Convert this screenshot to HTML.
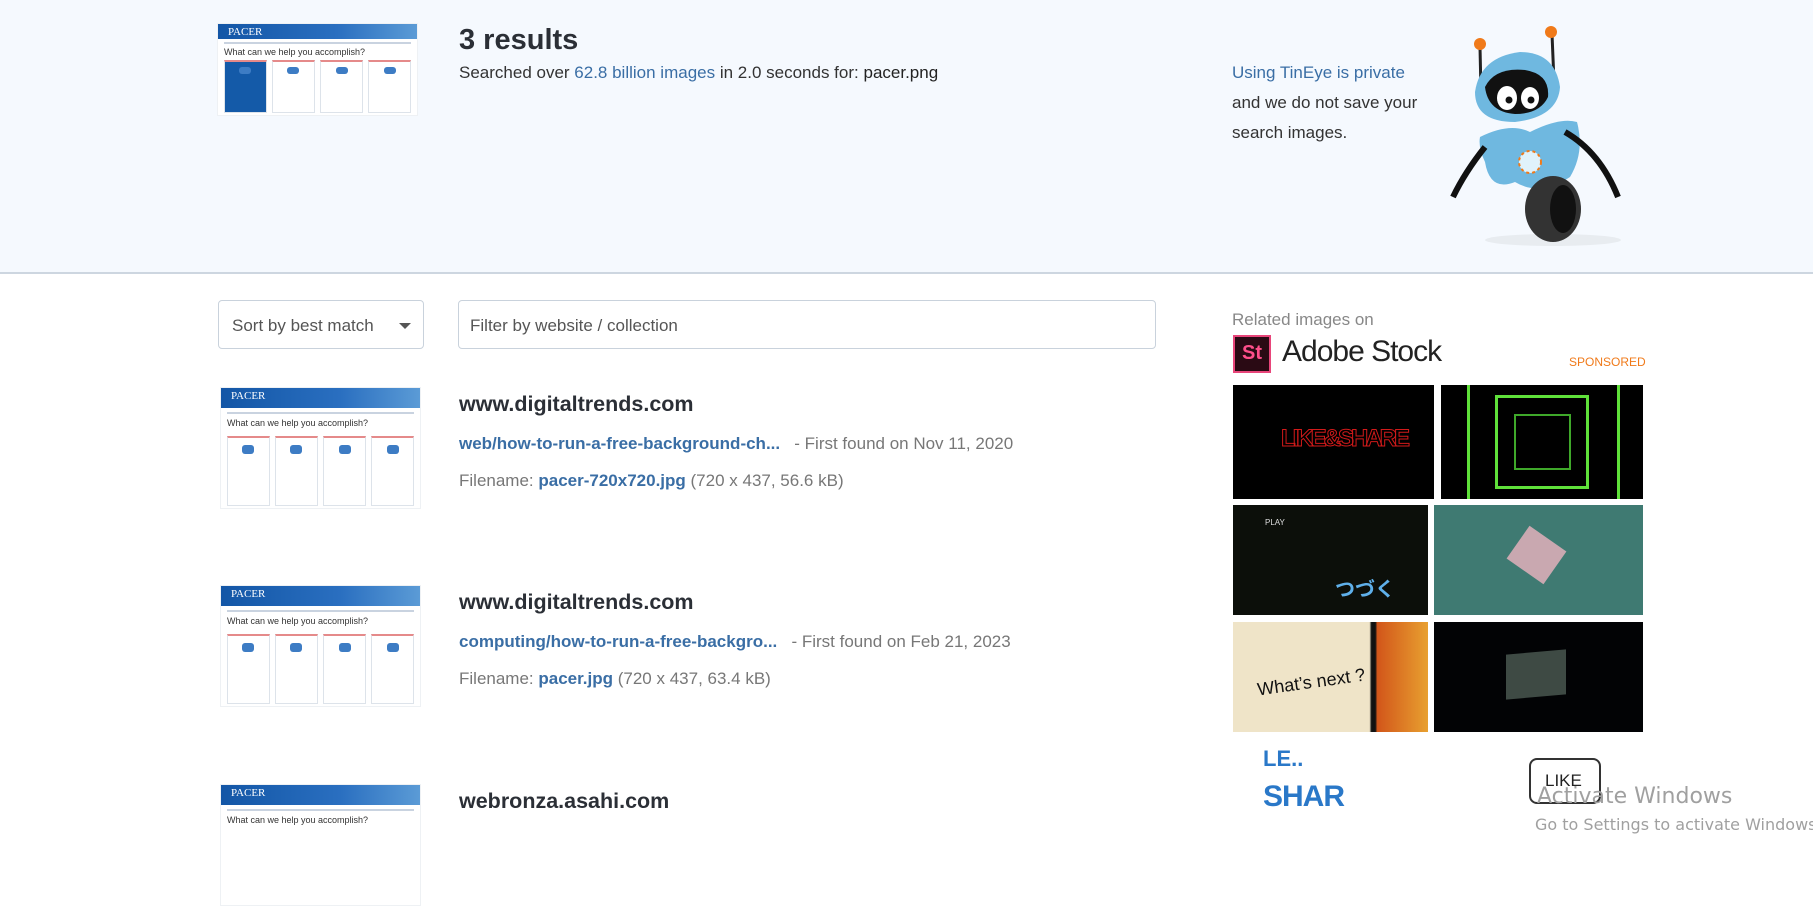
<!DOCTYPE html>
<html><head><meta charset="utf-8">
<style>
*{margin:0;padding:0;box-sizing:border-box}
body{width:1813px;height:828px;overflow:hidden;background:#fff;font-family:"Liberation Sans","Noto Sans CJK JP",sans-serif;color:#2b2f36;position:relative}
.hdr{position:absolute;left:0;top:0;width:1813px;height:274px;background:#f5f9fe;border-bottom:2px solid #cdd6e0}
.abs{position:absolute}
a{color:#3a6ea5;text-decoration:none}
.thumb{position:absolute;background:#fff;overflow:hidden;border:1px solid #eef1f4}
.thumb .bar{position:absolute;left:0;top:0;right:0;height:17%;background:linear-gradient(90deg,#1356a6,#2a6fc0 60%,#5b9bd6)}
.thumb .bar span{position:absolute;left:5%;top:12%;color:#fff;font-family:"Liberation Serif",serif;font-size:11px}
.thumb .nav{position:absolute;left:3%;right:3%;top:20%;height:2px;background:#c9d3e0}
.thumb .q{position:absolute;left:3%;top:25%;font-size:9px;color:#333;white-space:nowrap}
.thumb .cards{position:absolute;left:3%;right:3%;top:40%;bottom:2%;display:flex;gap:3%}
.thumb .cards div{flex:1;border:1px solid #dde3ea;border-top:2px solid #e58a8a;background:#fff;position:relative}
.thumb .cards div:after{content:"";position:absolute;left:35%;top:10%;width:30%;height:14%;background:#3d7cc4;border-radius:3px}
.thumb .cards div.blue{background:#145aa8}
.title{position:absolute;font-size:21.5px;font-weight:bold;color:#2b2f36}
.link{position:absolute;font-size:17px;color:#777;white-space:nowrap}
.link a{font-weight:bold}
.grid div{position:absolute;overflow:hidden}
</style></head><body>
<div class="hdr"></div>

<div class="thumb" style="left:217px;top:23px;width:201px;height:93px">
 <div class="bar"><span>PACER</span></div><div class="nav"></div><div class="q">What can we help you accomplish?</div>
 <div class="cards"><div class="blue"></div><div></div><div></div><div></div></div>
</div>
<div class="abs" style="left:459px;top:24px;font-size:29px;font-weight:bold;color:#2b2f36">3 results</div>
<div class="abs" style="left:459px;top:63px;font-size:17px;color:#333">Searched over <a>62.8 billion images</a> in 2.0 seconds for: <span style="color:#222">pacer.png</span></div>

<div class="abs" style="left:1232px;top:58px;font-size:17px;line-height:30px;color:#333">
 <a style="font-weight:normal">Using TinEye is private</a><br>and we do not save your<br>search images.</div>

<svg class="abs" style="left:1450px;top:22px" width="200" height="232" viewBox="0 0 200 232">
 <ellipse cx="103" cy="218" rx="68" ry="6" fill="#e8ecf0"/>
 <line x1="30" y1="25" x2="31" y2="70" stroke="#222" stroke-width="3"/>
 <line x1="102" y1="12" x2="104" y2="60" stroke="#222" stroke-width="3"/>
 <circle cx="30" cy="22" r="6" fill="#f07a1a"/><circle cx="101" cy="10" r="6" fill="#f07a1a"/>
 <path d="M25 70 Q30 35 70 30 Q105 30 110 65 Q108 95 65 100 Q25 100 25 70Z" fill="#6fb8e0"/>
 <path d="M35 65 Q45 45 75 48 Q100 52 98 75 Q90 92 65 92 Q38 90 35 65Z" fill="#111"/>
 <ellipse cx="57" cy="76" rx="10" ry="12" fill="#fff"/><ellipse cx="80" cy="76" rx="9" ry="11" fill="#fff"/>
 <circle cx="59" cy="78" r="3.5" fill="#111"/><circle cx="81" cy="78" r="3.5" fill="#111"/>
 <path d="M30 115 Q60 100 80 110 Q110 95 127 100 Q135 130 120 155 Q90 175 65 160 Q40 170 35 140 Q28 125 30 115Z" fill="#6fb8e0"/>
 <path d="M35 125 Q15 150 3 175" stroke="#111" stroke-width="6" fill="none"/>
 <path d="M115 110 Q150 130 168 175" stroke="#111" stroke-width="6" fill="none"/>
 <circle cx="80" cy="140" r="11" fill="#e0f2fb" stroke="#f07a1a" stroke-width="2" stroke-dasharray="3 3"/>
 <ellipse cx="103" cy="187" rx="28" ry="33" fill="#333"/><ellipse cx="113" cy="187" rx="13" ry="24" fill="#111"/>
</svg>

<div class="abs" style="left:218px;top:300px;width:206px;height:49px;border:1px solid #c9d2dc;border-radius:4px;background:#fff;font-size:17px;color:#555;padding:15px 0 0 13px">Sort by best match
 <div class="abs" style="right:12px;top:22px;border-left:6px solid transparent;border-right:6px solid transparent;border-top:6px solid #555"></div></div>
<div class="abs" style="left:458px;top:300px;width:698px;height:49px;border:1px solid #c9d2dc;border-radius:4px;background:#fff;font-size:17px;color:#555;padding:15px 0 0 11px">Filter by website / collection</div>

<div class="thumb" style="left:220px;top:387px;width:201px;height:122px">
 <div class="bar"><span>PACER</span></div><div class="nav"></div><div class="q">What can we help you accomplish?</div>
 <div class="cards"><div></div><div></div><div></div><div></div></div></div>
<div class="title" style="left:459px;top:392px">www.digitaltrends.com</div>
<div class="link" style="left:459px;top:434px"><a>web/how-to-run-a-free-background-ch...</a> &nbsp; - First found on Nov 11, 2020</div>
<div class="link" style="left:459px;top:471px">Filename: <a>pacer-720x720.jpg</a> (720 x 437, 56.6 kB)</div>

<div class="thumb" style="left:220px;top:585px;width:201px;height:122px">
 <div class="bar"><span>PACER</span></div><div class="nav"></div><div class="q">What can we help you accomplish?</div>
 <div class="cards"><div></div><div></div><div></div><div></div></div></div>
<div class="title" style="left:459px;top:590px">www.digitaltrends.com</div>
<div class="link" style="left:459px;top:632px"><a>computing/how-to-run-a-free-backgro...</a> &nbsp; - First found on Feb 21, 2023</div>
<div class="link" style="left:459px;top:669px">Filename: <a>pacer.jpg</a> (720 x 437, 63.4 kB)</div>

<div class="thumb" style="left:220px;top:784px;width:201px;height:122px">
 <div class="bar"><span>PACER</span></div><div class="nav"></div><div class="q">What can we help you accomplish?</div></div>
<div class="title" style="left:459px;top:789px">webronza.asahi.com</div>

<div class="abs" style="left:1232px;top:310px;font-size:17px;color:#888">Related images on</div>
<div class="abs" style="left:1233px;top:335px;width:38px;height:38px;background:#2a0a14;border:2px solid #e8457a;color:#ff4f8b;font-weight:bold;font-size:20px;text-align:center;line-height:33px">St</div>
<div class="abs" style="left:1282px;top:335px;font-size:30px;color:#222;letter-spacing:-1px">Adobe Stock</div>
<div class="abs" style="left:1569px;top:355px;font-size:12px;color:#f07a1a">SPONSORED</div>

<div class="grid">
 <div style="left:1233px;top:385px;width:201px;height:114px;background:#000"><span style="position:absolute;left:48px;top:40px;color:#000;font-weight:bold;font-size:24px;letter-spacing:-3px;-webkit-text-stroke:1px #d21a1a">LIKE&amp;SHARE</span></div>
 <div style="left:1441px;top:385px;width:202px;height:114px;background:#000">
  <div style="position:absolute;left:26px;top:0;width:153px;height:114px;border-left:3px solid #5fe03a;border-right:3px solid #5fe03a"></div>
  <div style="position:absolute;left:54px;top:10px;width:94px;height:94px;border:3px solid #5fe03a"></div>
  <div style="position:absolute;left:73px;top:29px;width:57px;height:56px;border:2px solid #3fa82a"></div></div>
 <div style="left:1233px;top:505px;width:195px;height:110px;background:#0c0f0a"><span style="position:absolute;left:32px;top:13px;color:#ddd;font-size:8px">PLAY</span><span style="position:absolute;left:102px;top:68px;color:#5fb0ea;font-weight:bold;font-size:20px;font-family:'Noto Sans CJK JP',sans-serif">つづく</span></div>
 <div style="left:1434px;top:505px;width:209px;height:110px;background:#3f7a72"><div style="position:absolute;left:80px;top:30px;width:45px;height:40px;background:#c9a8b0;transform:rotate(35deg)"></div></div>
 <div style="left:1233px;top:622px;width:195px;height:110px;background:linear-gradient(90deg,#efe4c8 70%,#111 71%,#111 73%,#d2561a 74%,#e8a030)"><span style="position:absolute;left:24px;top:50px;font-size:18px;color:#111;transform:rotate(-8deg)">What’s next ?</span></div>
 <div style="left:1434px;top:622px;width:209px;height:110px;background:#020305"><div style="position:absolute;left:72px;top:30px;width:60px;height:45px;background:#3e4a44;transform:skewY(-5deg)"></div></div>
 <div style="left:1233px;top:738px;width:201px;height:90px;background:#fff"><span style="position:absolute;left:30px;top:8px;color:#2a78c8;font-weight:900;font-size:22px">LE..</span><span style="position:absolute;left:30px;top:42px;color:#2a78c8;font-weight:900;font-size:30px;letter-spacing:-1px">SHAR</span></div>
 <div style="left:1441px;top:738px;width:202px;height:90px;background:#fff"><div style="position:absolute;left:88px;top:20px;width:72px;height:46px;border:2px solid #333;border-radius:8px"></div><span style="position:absolute;left:104px;top:33px;font-size:17px;color:#222">LIKE</span></div>
</div>

<div class="abs" style="left:1537px;top:784px;font-size:22px;color:#a0a0a0;font-family:'DejaVu Sans',sans-serif;white-space:nowrap">Activate Windows</div>
<div class="abs" style="left:1535px;top:815px;font-size:16px;color:#a0a0a0;font-family:'DejaVu Sans',sans-serif;white-space:nowrap">Go to Settings to activate Windows.</div>
</body></html>
